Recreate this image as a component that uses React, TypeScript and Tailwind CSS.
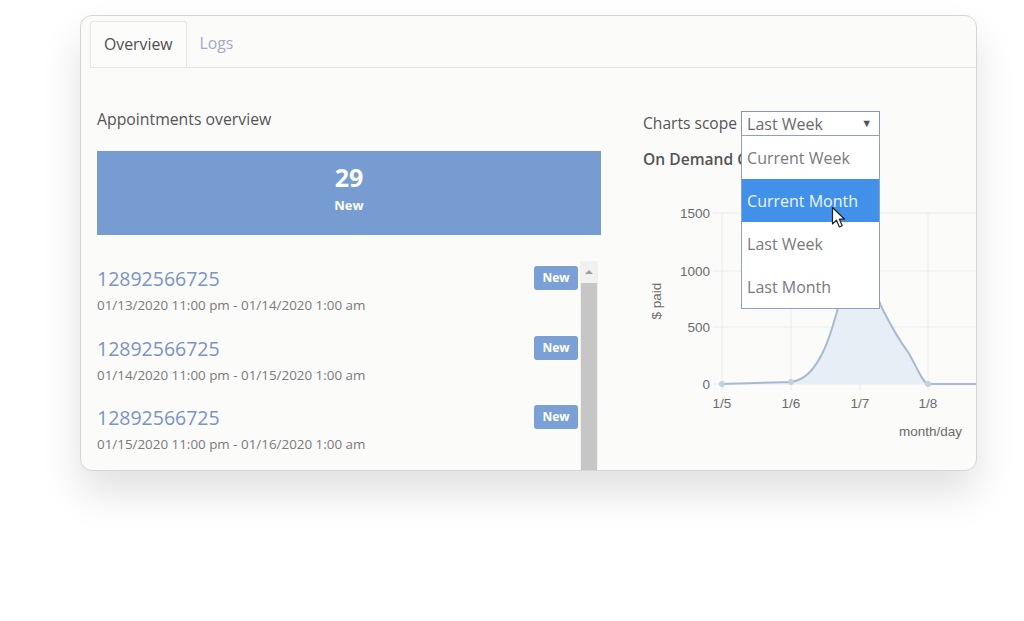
const appointments = [
  { phone: "12892566725", range: "01/13/2020 11:00 pm - 01/14/2020 1:00 am" },
  { phone: "12892566725", range: "01/14/2020 11:00 pm - 01/15/2020 1:00 am" },
  { phone: "12892566725", range: "01/15/2020 11:00 pm - 01/16/2020 1:00 am" },
];

const scopes = ["Current Week", "Current Month", "Last Week", "Last Month"];

function Cursor() {
  return (
    <svg width="16" height="24" viewBox="0 0 16 24" className="absolute left-[89px] top-[70px]">
      <path
        d="M1.5 1.5 L1.5 18 L5.5 14.2 L8.4 21 L11.2 19.8 L8.4 13.2 L13.6 13.2 Z"
        fill="#fff"
        stroke="#222"
        strokeWidth="1.2"
        strokeLinejoin="round"
      />
    </svg>
  );
}

function Chart() {
  const yTicks = [
    { label: "1500", y: 213 },
    { label: "1000", y: 271 },
    { label: "500", y: 327 },
    { label: "0", y: 384 },
  ];
  const xTicks = [
    { label: "1/5", x: 722 },
    { label: "1/6", x: 791 },
    { label: "1/7", x: 860 },
    { label: "1/8", x: 928 },
  ];
  const line =
    "M722,384 L791,382 C806,380 815,368 823,352 C830,338 834,322 838,308 C846,286 853,268 860,268 C868,268 874,290 882,308 C891,326 899,340 908,352 C916,365 922,382 928,384 L1000,384";

  return (
    <svg width="340" height="260" viewBox="643 190 340 260" className="block mt-[21px] overflow-visible">
      {yTicks.map((t) => (
        <g key={t.label}>
          <line x1="713" x2="1000" y1={t.y} y2={t.y} stroke="#ebebeb" strokeWidth="1" />
          <text x="710" y={t.y + 5} textAnchor="end" fontSize="13.5" fill="#6b6b6b" fontFamily="Liberation Sans, Arial, sans-serif">
            {t.label}
          </text>
        </g>
      ))}
      {[...xTicks, { label: "", x: 997 }].map((t) => (
        <g key={t.x}>
          <line x1={t.x} x2={t.x} y1="213" y2="390" stroke="#ebebeb" strokeWidth="1" />
          {t.label && (
            <text x={t.x} y="408" textAnchor="middle" fontSize="13.5" fill="#6b6b6b" fontFamily="Liberation Sans, Arial, sans-serif">
              {t.label}
            </text>
          )}
        </g>
      ))}
      <path d={line + " L1000,384 L722,384 Z"} fill="#e8eef5" />
      <path d={line} fill="none" stroke="#a8bad2" strokeWidth="2" />
      {[
        [722, 384],
        [791, 382],
        [928, 384],
      ].map(([cx, cy]) => (
        <circle key={cx} cx={cx} cy={cy} r="3" fill="#c3d1e3" />
      ))}
      <text x="962" y="436" textAnchor="end" fontSize="13.5" fill="#6b6b6b" fontFamily="Liberation Sans, Arial, sans-serif">
        month/day
      </text>
      <text
        x="656"
        y="306"
        textAnchor="middle"
        fontSize="13.5"
        fill="#6b6b6b"
        fontFamily="Liberation Sans, Arial, sans-serif"
        transform="rotate(-90 656 301)"
      >
        $ paid
      </text>
    </svg>
  );
}

export default function App() {
  return (
    <div className="w-[1024px] h-[621px] bg-white pl-[80px] pt-[15px] font-['Open_Sans',sans-serif]">
      <div className="w-[897px] h-[456px] rounded-[12px] border border-[#d5d5d5] bg-[#fbfbfa] overflow-hidden shadow-[0_22px_40px_rgba(0,0,0,0.12)]">
        {/* Tabs */}
        <div className="flex ml-[9px] mt-[5px] border-b border-[#e5e5e5]">
          <div className="h-[46px] px-[13px] flex items-center border border-b-0 border-[#e5e5e5] rounded-t-[3px] bg-[#fcfcfb] -mb-px text-[15.8px] text-[#4f4f4f]">
            Overview
          </div>
          <div className="h-[46px] px-[13px] flex items-center text-[15.8px] text-[#a4a9c4]">Logs</div>
        </div>

        <div className="flex pl-[16px]">
          {/* Appointments */}
          <div className="w-[504px] shrink-0 pt-[41px]">
            <div className="h-[20px] leading-[20px] text-[15.8px] text-[#555]">Appointments overview</div>
            <div className="mt-[22px] h-[84px] bg-[#769cd1] flex flex-col items-center pt-[12px] text-white">
              <div className="text-[25px] leading-[28px] font-bold">29</div>
              <div className="mt-[6px] text-[13px] leading-[16px] font-bold">New</div>
            </div>

            <div className="mt-[26px] h-[220px] flex w-[501px]">
              <div className="w-[482px] shrink-0">
                {appointments.map((a, i) => (
                  <div key={i} className="h-[69.5px] pt-[6px]">
                    <div className="flex items-start justify-between">
                      <span className="text-[19.5px] leading-[24px] text-[#7b93c6]">{a.phone}</span>
                      <span className="mr-[1px] -mt-[1px] h-[24px] w-[44px] rounded-[3px] bg-[#7aa0d5] flex items-center justify-center text-[12px] font-bold text-white">
                        New
                      </span>
                    </div>
                    <div className="mt-[6px] text-[13.4px] leading-[16px] text-[#7a7a7a]">{a.range}</div>
                  </div>
                ))}
              </div>
              <div className="ml-[1px] w-[18px] flex flex-col bg-[#f1f1f1]">
                <div className="h-[22px] flex items-center justify-center">
                  <div className="w-0 h-0 border-l-[4px] border-r-[4px] border-b-[4px] border-l-transparent border-r-transparent border-b-[#a0a0a0]" />
                </div>
                <div className="flex-1 bg-[#c6c6c6] mx-[1px]" />
              </div>
            </div>
          </div>

          {/* Charts */}
          <div className="ml-[42px] pt-[43px] flex-1">
            <div className="flex items-center h-[25px]">
              <span className="text-[15.6px] text-[#555] mr-[4px] whitespace-nowrap">Charts scope</span>
              <div className="relative w-[139px] shrink-0 h-[25px] border border-[#8196c1] bg-white flex items-center justify-between pl-[5px] pr-[7px]">
                <span className="text-[16px] text-[#6a6a6a]">Last Week</span>
                <span className="text-[11px] text-[#555]">▼</span>
                <div className="absolute left-[-1px] top-[23px] w-[139px] border border-[#8fa0c4] bg-white z-10">
                  {scopes.map((s, i) => (
                    <div
                      key={s}
                      className={
                        i === 1
                          ? "h-[43px] flex items-center pl-[5px] text-[16px] bg-[#4191ea] text-[#eef5ff]"
                          : "h-[43px] flex items-center pl-[5px] text-[16px] text-[#7a7a7a]"
                      }
                    >
                      {s}
                    </div>
                  ))}
                  <Cursor />
                </div>
              </div>
            </div>
            <div className="mt-[13px] h-[20px] leading-[20px] text-[15.6px] font-semibold text-[#555] whitespace-nowrap">
              On Demand Calls
            </div>
            <Chart />
          </div>
        </div>
      </div>
    </div>
  );
}
